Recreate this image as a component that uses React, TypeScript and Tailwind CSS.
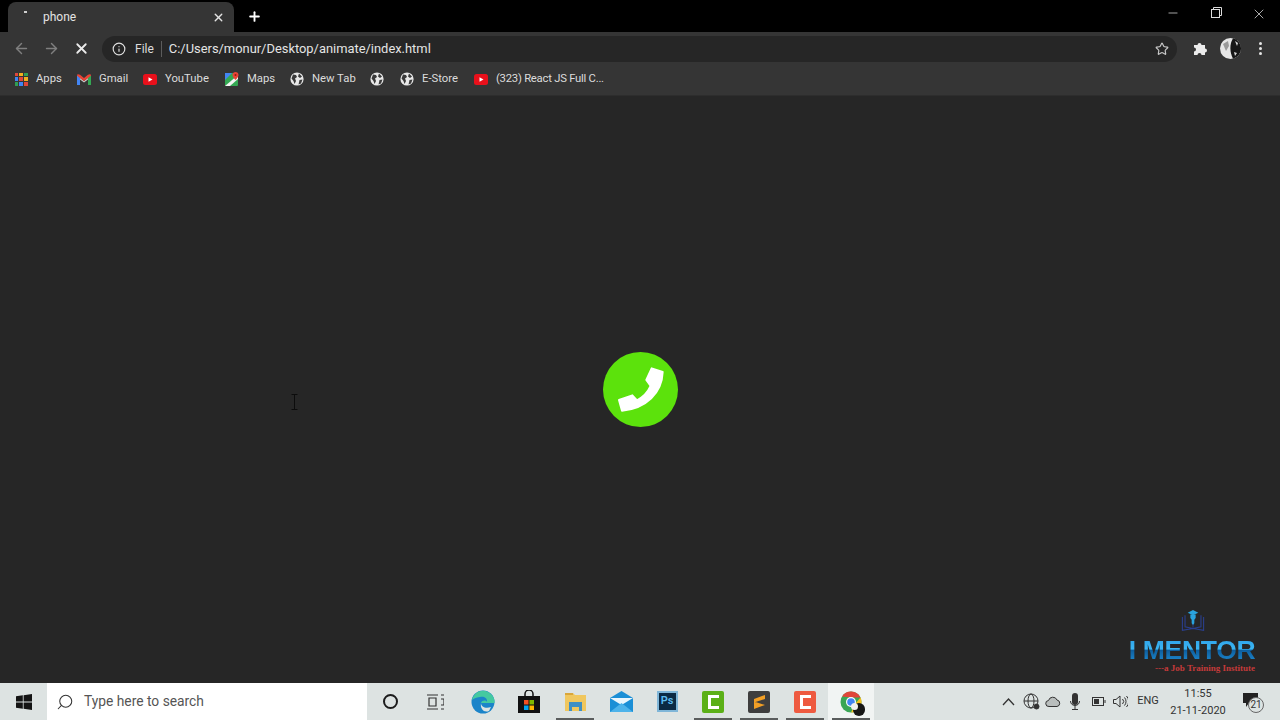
import { ArrowLeft, ArrowRight, Info, Minus, Plus, Search, Star, X } from 'lucide-react';

const uiFont = { fontFamily: 'Roboto, "Noto Sans", sans-serif' };

function Globe() {
  return (
    <svg width="14" height="14" viewBox="0 0 14 14">
      <circle cx="7" cy="7" r="6.6" fill="#e8e8e8" />
      <path d="M3 2.500l3 .5 1 2-2 1.500 1 2.500-1.500 3L3.500 9 1.500 6.500zM9 1.500l3 3-2 1.500-2-1.500zM9.500 8l3-.5-1.500 4-2.500 1z" fill="#3a3a3a" />
    </svg>
  );
}

function YouTube() {
  return (
    <svg width="14" height="11" viewBox="0 0 14 11">
      <rect width="14" height="11" rx="2.500" fill="#e9101b" />
      <path d="M5.500 3.200 9.500 5.500 5.500 7.800z" fill="#fff" />
    </svg>
  );
}

function AppsGrid() {
  const colors = ['#e0463a', '#f2b01e', '#2f9e54', '#4285f4', '#e0463a', '#f2b01e', '#2f9e54', '#4285f4', '#e0463a'];
  return (
    <div className="grid grid-cols-3 gap-px w-[13px] h-[13px]">
      {colors.map((c, i) => (
        <div key={i} style={{ background: c }} />
      ))}
    </div>
  );
}

function GmailIcon() {
  return (
    <svg width="14" height="11" viewBox="0 0 14 11">
      <path d="M0 1.500 7 7l7-5.500V11h-3V5.500L7 8.500l-4-3V11H0z" fill="#c9c9c9" />
      <path d="M0 1.500V11h3V3.800z" fill="#4285f4" />
      <path d="M14 1.500V11h-3V3.800z" fill="#34a853" />
      <path d="M0 1.500C0 0 1.500-.300 3 .800L7 4l4-3.200c1.500-1.100 3-.800 3 .700L11 4 7 7 3 4z" fill="#ea4335" />
    </svg>
  );
}

function MapsIcon() {
  return (
    <svg width="14" height="14" viewBox="0 0 14 14">
      <rect y="1" width="13" height="13" rx="1" fill="#34a853" />
      <path d="M0 14 13 3v4L5 14z" fill="#f4f4f4" />
      <path d="M0 1h7L0 8z" fill="#4285f4" />
      <path d="M10.500 0C8.800 0 7.500 1.300 7.500 3c0 2 3 5 3 5s3-3 3-5c0-1.700-1.300-3-3-3z" fill="#ea4335" />
      <circle cx="10.500" cy="3" r="1" fill="#8c1d14" />
    </svg>
  );
}

function Bookmark({ icon, label, width, tight }: { icon: React.ReactNode; label?: string; width: string; tight?: boolean }) {
  return (
    <div className={`flex items-center gap-[8px] shrink-0 ${width}`}>
      <span className="w-[14px] flex justify-center shrink-0">{icon}</span>
      {label && (
        <span className={`text-[11.3px] text-[#dcdcdc] whitespace-nowrap ${tight ? 'tracking-[-.25px]' : ''}`}>{label}</span>
      )}
    </div>
  );
}

function TaskIcon({ children, running, active }: { children: React.ReactNode; running?: boolean; active?: boolean }) {
  return (
    <div className={`relative w-[46px] h-full flex items-center justify-center ${active ? 'bg-[#f1f4f3]' : ''}`}>
      {children}
      {running && <div className="absolute bottom-0 left-[4px] right-[4px] h-[2px] bg-[#5a5d5d]" />}
    </div>
  );
}

export default function App() {
  return (
    <div className="w-[1280px] h-[720px] flex flex-col overflow-hidden bg-[#262626]" style={uiFont}>
      {/* Tab strip */}
      <div className="h-[32px] bg-black flex items-end shrink-0 pl-[8px]">
        <div className="w-[226px] h-[30px] bg-[#353535] rounded-t-[8px] flex items-center pl-[16px] pr-[9px]">
          <span className="w-[3px] h-[2px] bg-[#cfcfcf] mb-[10px]" />
          <span className="ml-[16px] text-[12px] text-[#e4e4e4] flex-1">phone</span>
          <X size={13} strokeWidth={2.500} color="#e4e4e4" />
        </div>
        <div className="ml-[13px] h-[32px] flex items-center">
          <Plus size={15} strokeWidth={3} color="#fff" />
        </div>
        <div className="ml-auto h-[32px] flex items-start pt-[6px] text-[#e8e8e8]">
          <div className="w-[43px] pr-[1px] flex justify-center">
            <Minus size={14} strokeWidth={1.200} />
          </div>
          <div className="w-[43px] pt-[1px] flex justify-center">
            <svg width="11" height="11" viewBox="0 0 11 11" fill="none" stroke="#dcdcdc">
              <rect x=".5" y="2.500" width="8" height="8" />
              <path d="M2.500 2.500v-2h8v8h-2" />
            </svg>
          </div>
          <div className="w-[42px] flex justify-center">
            <X size={16} strokeWidth={1.100} />
          </div>
        </div>
      </div>

      {/* Toolbar */}
      <div className="h-[33px] bg-[#353535] flex items-center shrink-0 pl-[13px] pr-[11px]">
        <ArrowLeft size={17} strokeWidth={2} color="#7f7f7f" />
        <ArrowRight size={17} strokeWidth={2} color="#7f7f7f" className="ml-[13px]" />
        <X size={17} strokeWidth={2.500} color="#ebebeb" className="ml-[13px]" />
        <div className="ml-[12px] w-[1075px] h-[26px] bg-[#262626] rounded-full flex items-center pl-[10px] pr-[8px]">
          <Info size={14} strokeWidth={2} color="#e0e0e0" />
          <span className="ml-[9px] text-[12px] text-[#dcdcdc]">File</span>
          <span className="ml-[7px] w-px h-[16px] bg-[#5c5c5c]" />
          <span className="ml-[7px] text-[12.9px] text-[#e4e4e4] flex-1">C:/Users/monur/Desktop/animate/index.html</span>
          <Star size={14} strokeWidth={2} color="#c8c8c8" />
        </div>
        <svg width="15" height="15" viewBox="0 0 15 15" className="ml-[16px]">
          <path d="M1 4h3.500a2 2 0 0 1 4 0H12v3.500a2 2 0 0 1 0 4V14H8.500a2 2 0 0 0-4 0H1v-3.500a2 2 0 0 0 0-4z" fill="#ececec" />
        </svg>
        <svg width="21" height="21" viewBox="0 0 21 21" className="ml-[12px]">
          <circle cx="10.500" cy="10.500" r="10.500" fill="#e6e6e6" />
          <path d="M13 .3A10.500 10.500 0 0 1 13 20.700C10 15 9 7 13 .3z" fill="#161616" />
          <path d="M3 6l5-3 1 5-3 5z" fill="#9a9a9a" />
          <path d="M15 3l3 2-1 3zM14 14l3 1-2 3z" fill="#d8d8d8" />
        </svg>
        <div className="ml-[18px] flex flex-col gap-[2px]">
          <span className="w-[3px] h-[3px] rounded-full bg-[#e4e4e4]" />
          <span className="w-[3px] h-[3px] rounded-full bg-[#e4e4e4]" />
          <span className="w-[3px] h-[3px] rounded-full bg-[#e4e4e4]" />
        </div>
      </div>

      {/* Bookmarks */}
      <div className="h-[31px] bg-[#353535] flex items-center shrink-0 pl-[14px] pb-[2px] border-b border-[#2d2d2d]">
        <Bookmark icon={<AppsGrid />} label="Apps" width="w-[63px]" />
        <Bookmark icon={<GmailIcon />} label="Gmail" width="w-[66px]" />
        <Bookmark icon={<YouTube />} label="YouTube" width="w-[82px]" />
        <Bookmark icon={<MapsIcon />} label="Maps" width="w-[65px]" />
        <Bookmark icon={<Globe />} label="New Tab" width="w-[80px]" />
        <Bookmark icon={<Globe />} width="w-[30px]" />
        <Bookmark icon={<Globe />} label="E-Store" width="w-[74px]" />
        <Bookmark icon={<YouTube />} label="(323) React JS Full C..." width="w-[140px]" tight />
      </div>

      {/* Page */}
      <div className="relative flex-1 bg-[#262626] flex items-center justify-center">
        <div className="w-[75px] h-[75px] rounded-full bg-[#5ce20c] ml-[1px]">
          <svg width="75" height="75" viewBox="40 38 225 225">
            <path
              d="M186 87 219 98C217 160 170 207 97 214L88 182 128 168 142 183C160 174 175 158 183 140L170 122Z"
              fill="#fff"
              stroke="#fff"
              strokeWidth="6"
              strokeLinejoin="round"
            />
          </svg>
        </div>

        {/* Text cursor */}
        <svg width="7" height="16" viewBox="0 0 7 16" className="absolute left-[291px] top-[298px]" fill="none" stroke="#0c0c0c">
          <path d="M.5.500h6M3.500.500v15M.5 15.500h6" />
        </svg>

        {/* Watermark */}
        <div className="absolute left-[1128px] top-[514px] w-[128px] flex flex-col items-center">
          <svg width="26" height="23" viewBox="0 0 26 26" fill="none" className="ml-[1px]">
            <path d="M1 8v15l12-2 12 2V8M4 6v13l9 2 9-2V6" stroke="#2a3f8f" strokeWidth="1.200" />
            <path d="M13 8v12" stroke="#2a3f8f" />
            <path d="M13 0l6 3-6 3-6-3z" fill="#2aa3dc" />
            <path d="M10 5h6v4l-1.500 2v4l-1.500 2-1.500-2v-4L10 9z" fill="#2aa3dc" />
          </svg>
          <span
            className="mt-[6px] text-[26.5px] leading-[22px] font-bold whitespace-nowrap bg-[linear-gradient(180deg,#2fa4ea_0%,#3bb5f2_45%,#0e5f9f_52%,#1c86cc_100%)] bg-clip-text text-transparent tracking-[-.3px]"
            style={{ fontFamily: '"Liberation Sans", sans-serif' }}
          >
            I MENTOR
          </span>
          <span
            className="self-end mt-[3px] mr-[1px] text-[9px] leading-[9px] font-bold text-[#c43a3a] whitespace-nowrap"
            style={{ fontFamily: '"Liberation Serif", serif' }}
          >
            ---a Job Training Institute
          </span>
        </div>
      </div>

      {/* Taskbar */}
      <div className="h-[37px] bg-[#dde3e2] flex items-center shrink-0">
        <div className="w-[47px] flex justify-center">
          <svg width="16" height="16" viewBox="0 0 16 16" fill="#141414">
            <path d="M0 2.300 6.800 1.300V7.600H0zM7.600 1.200 16 0V7.600H7.600zM0 8.400H6.800V14.700L0 13.700zM7.600 8.400H16V16L7.600 14.800z" />
          </svg>
        </div>
        <div className="w-[320px] h-full bg-white flex items-center pl-[9px]">
          <Search size={18} strokeWidth={1.400} color="#333" className="-scale-x-100" />
          <span className="ml-[10px] text-[13.8px] text-[#555]">Type here to search</span>
        </div>
        <div className="w-[47px] flex justify-center">
          <div className="w-[15px] h-[15px] rounded-full border-[2px] border-[#1c1c1c]" />
        </div>
        <div className="w-[43px] flex justify-center">
          <svg width="17" height="16" viewBox="0 0 17 16" fill="none" stroke="#333" strokeWidth="1.200">
            <path d="M0 1h11M0 15h11M2 4h7v8H2zM14 1h3M14 5h3v6h-3M14 15h3" />
          </svg>
        </div>
        <div className="w-[3px]" />
        <TaskIcon>
          <svg width="24" height="24" viewBox="0 0 24 24">
            <circle cx="12" cy="12" r="11.500" fill="#1b84c9" />
            <path d="M1 10C3 2 11-1 17 2c4 2 7 6 6.500 11H10c1-3 5-3 6-1 .5-4-3-6-7-5-4 .5-7 2-8 3z" fill="#45c9a0" />
            <path d="M10 13c0 4 5 6 10 4l-2 4c-5 2-9-2-8-8z" fill="#dde3e2" />
          </svg>
        </TaskIcon>
        <TaskIcon>
          <svg width="22" height="23" viewBox="0 0 22 23">
            <path d="M7 6V4a4 4 0 0 1 8 0v2" fill="none" stroke="#111" strokeWidth="1.500" />
            <rect y="6" width="22" height="17" fill="#111" />
            <rect x="6" y="10" width="4.500" height="4.500" fill="#f25022" />
            <rect x="11.500" y="10" width="4.500" height="4.500" fill="#7fba00" />
            <rect x="6" y="15.500" width="4.500" height="4.500" fill="#00a4ef" />
            <rect x="11.500" y="15.500" width="4.500" height="4.500" fill="#ffb900" />
          </svg>
        </TaskIcon>
        <TaskIcon running>
          <svg width="21" height="19" viewBox="0 0 21 19">
            <path d="M0 1h8l2 2h11v16H0z" fill="#f0c75e" />
            <path d="M0 1h8v2H0z" fill="#d9a63a" />
            <path d="M4 10h13v9h-3v-4H7v4H4z" fill="#3f8fc4" />
          </svg>
        </TaskIcon>
        <TaskIcon>
          <svg width="23" height="21" viewBox="0 0 23 21">
            <path d="M0 7 11.500 0 23 7v14H0z" fill="#1b8fd6" />
            <path d="M0 7h23L11.500 14z" fill="#eaf6fd" />
            <path d="M0 21 11.500 12 23 21z" fill="#4db3ea" />
          </svg>
        </TaskIcon>
        <TaskIcon>
          <div className="w-[21px] h-[21px] bg-[#0b2a44] border-[2px] border-[#7fb6d8] flex items-center justify-center text-[11px] font-semibold text-[#5cbcf0]">
            Ps
          </div>
        </TaskIcon>
        <TaskIcon running>
          <div className="w-[22px] h-[22px] bg-[#5bb017] rounded-[2px] flex items-center justify-center">
            <div className="w-[11px] h-[14px] border-[3px] border-r-0 border-white" />
          </div>
        </TaskIcon>
        <TaskIcon running>
          <div className="w-[22px] h-[22px] bg-[#3e3e3e] rounded-[2px] flex items-center justify-center">
            <svg width="11" height="14" viewBox="0 0 11 14">
              <path d="M11 0v4L0 7.500V4zM0 6.500l11 3.500v-.2L11 10 0 14v-4z" fill="#f29f25" />
            </svg>
          </div>
        </TaskIcon>
        <TaskIcon running>
          <div className="w-[22px] h-[22px] bg-[#ee5a40] rounded-[2px] flex items-center justify-center">
            <div className="w-[11px] h-[14px] border-[3px] border-r-0 border-white" />
          </div>
        </TaskIcon>
        <TaskIcon running active>
          <div className="relative w-[22px] h-[22px]">
            <svg width="22" height="22" viewBox="0 0 22 22">
              <circle cx="11" cy="11" r="10.500" fill="#3aa655" />
              <path d="M2 5.500A10.500 10.500 0 0 1 20.500 6.500H11z" fill="#e0463a" />
              <path d="M20.500 6.500A10.500 10.500 0 0 1 11 21.500L15 13z" fill="#f4c020" />
              <circle cx="11" cy="11" r="5" fill="#fff" />
              <circle cx="11" cy="11" r="3.800" fill="#4285f4" />
            </svg>
            <div className="absolute right-[-3px] bottom-[-3px] w-[12px] h-[13px] rounded-full bg-[#161616]" />
            <div className="absolute right-[4px] bottom-[3px] w-[7px] h-[7px] rounded-full bg-[#f1f1f1]" />
          </div>
        </TaskIcon>

        {/* Tray */}
        <div className="ml-auto flex items-center h-full text-[#333]">
          <svg width="13" height="8" viewBox="0 0 13 8" fill="none" stroke="#333" strokeWidth="1.300" className="mr-[8px]">
            <path d="M1 7l5.500-6L12 7" />
          </svg>
          <svg width="17" height="17" viewBox="0 0 17 17" fill="none" stroke="#333" className="mr-[5px]">
            <circle cx="8" cy="8" r="7" />
            <ellipse cx="8" cy="8" rx="3" ry="7" />
            <path d="M1 8h14" />
            <circle cx="13.500" cy="13.500" r="2.500" fill="#333" />
          </svg>
          <svg width="16" height="11" viewBox="0 0 16 11" className="mr-[9px]" fill="#b9bebd" stroke="#333">
            <path d="M4 10.500a3 3 0 0 1-.5-6A4.500 4.500 0 0 1 12 4a3.300 3.300 0 0 1 0 6.500z" />
          </svg>
          <svg width="10" height="17" viewBox="0 0 10 17" className="mr-[12px]">
            <rect x="2" y="0" width="6" height="12" rx="3" fill="#333" />
            <path d="M.5 8c0 6 9 6 9 0M5 13v3M2 16.500h6" fill="none" stroke="#333" />
          </svg>
          <svg width="14" height="9" viewBox="0 0 14 9" className="mr-[7px]" fill="none" stroke="#333">
            <rect x=".5" y=".5" width="11" height="8" />
            <rect x="2" y="2" width="5" height="5" fill="#333" stroke="none" />
            <path d="M13 3v3" />
          </svg>
          <svg width="15" height="13" viewBox="0 0 15 13" fill="none" stroke="#333" className="mr-[8px]">
            <path d="M.5 4.500h2.500L7 1v11L3 8.500H.5zM9.500 4a3.500 3.500 0 0 1 0 5M11.500 2.500a6 6 0 0 1 0 8M13.500 1a8 8 0 0 1 0 11" />
          </svg>
          <span className="text-[11px] w-[24px] text-center mr-[9px]">ENG</span>
          <div className="w-[58px] flex flex-col items-center text-[11px] leading-[17px] whitespace-nowrap">
            <span>11:55</span>
            <span>21-11-2020</span>
          </div>
          <div className="relative w-[20px] h-[20px] ml-[16px] mr-[17px]">
            <svg width="15" height="14" viewBox="0 0 15 14" className="absolute left-0 top-[1px]">
              <path d="M0 0h15v10H6l-3 4v-4H0z" fill="#222" />
            </svg>
            <div className="absolute left-[5px] top-[5px] w-[16px] h-[16px] rounded-full bg-[#dde3e2] border border-[#666] flex items-center justify-center text-[10px] leading-none">
              21
            </div>
          </div>
        </div>
      </div>
    </div>
  );
}
